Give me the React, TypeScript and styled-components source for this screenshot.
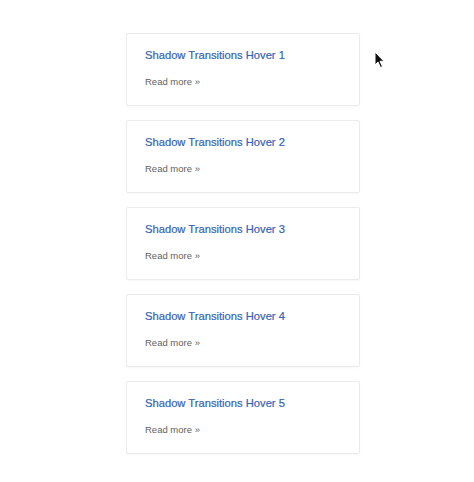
import React from 'react';
import styled, { createGlobalStyle } from 'styled-components';

const GlobalStyle = createGlobalStyle`
  html, body {
    margin: 0;
    padding: 0;
    background: #fff;
    font-family: "Helvetica Neue", "Liberation Sans", Arial, sans-serif;
  }
`;

const cards = [1, 2, 3, 4, 5];

function App() {
  return (
    <Page>
      <GlobalStyle />
      <List>
        {cards.map((n) => (
          <Card key={n}>
            <Title href="#">Shadow Transitions Hover {n}</Title>
            <More href="#">Read more &raquo;</More>
          </Card>
        ))}
      </List>
      <Cursor width="12" height="18" viewBox="0 0 12 18">
        <path
          d="M1 1 L1 14 L4 11 L6.5 16.5 L8.5 15.6 L6 10.3 L10 10.3 Z"
          fill="#111"
          stroke="#fff"
          strokeWidth="1"
          strokeLinejoin="round"
        />
      </Cursor>
    </Page>
  );
}

export default App;

const Page = styled.div`
  position: relative;
  width: 474px;
  height: 482px;
  padding-top: 33px;
  box-sizing: border-box;
`;

const List = styled.div`
  display: flex;
  flex-direction: column;
  gap: 14px;
  width: 234px;
  margin-left: 126px;
`;

const Card = styled.div`
  height: 73px;
  box-sizing: border-box;
  border: 1px solid #ebebeb;
  border-radius: 2px;
  background: #fff;
  padding: 13px 18px 0;
  display: flex;
  flex-direction: column;
  box-shadow: 0 1px 2px rgba(0, 0, 0, 0.03);
  transition: box-shadow 0.3s;
  &:hover {
    box-shadow: 0 4px 12px rgba(0, 0, 0, 0.12);
  }
`;

const Title = styled.a`
  font-size: 11.2px;
  line-height: 16px;
  color: #3563b3;
  text-decoration: none;
  -webkit-text-stroke: 0.2px #3563b3;
`;

const More = styled.a`
  margin-top: 12px;
  font-size: 9.5px;
  line-height: 14px;
  color: #5f5f5f;
  text-decoration: none;
`;

const Cursor = styled.svg`
  position: absolute;
  left: 374px;
  top: 51px;
`;
